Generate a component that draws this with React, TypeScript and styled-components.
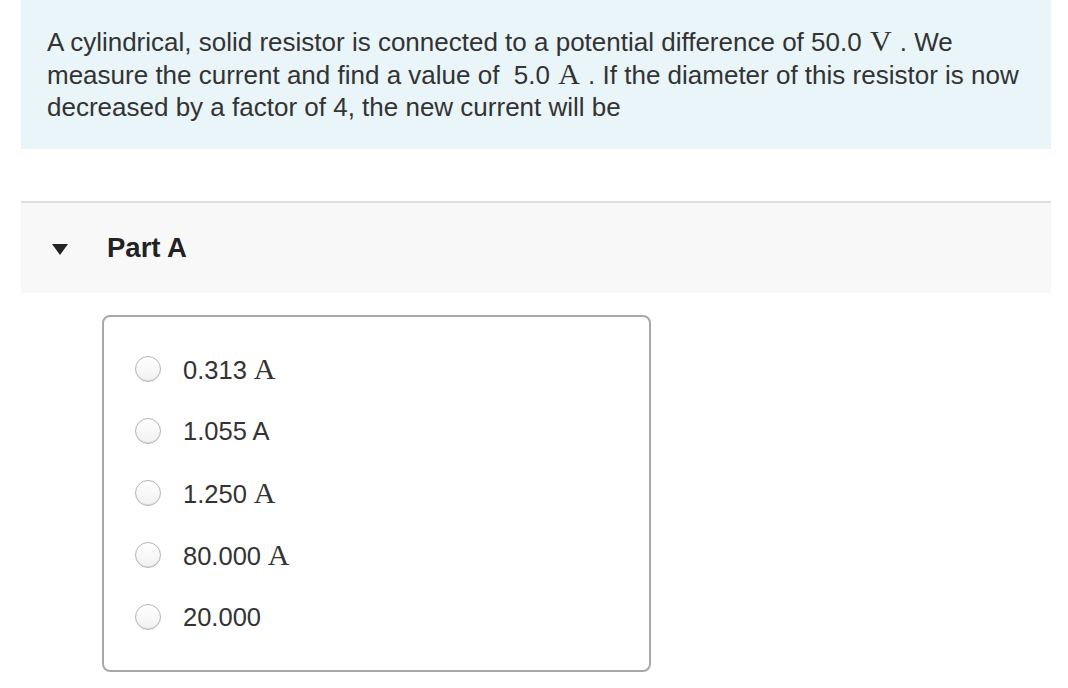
import React from "react";
import styled, { createGlobalStyle } from "styled-components";

const Global = createGlobalStyle`
  html, body { margin: 0; padding: 0; background: #fff; }
  body { font-family: "Liberation Sans", Arial, Helvetica, sans-serif; color: #333; }
`;

const Page = styled.div`
  width: 1068px;
  height: 688px;
  overflow: hidden;
  padding: 0 17px 0 21px;
  box-sizing: border-box;
`;

const Question = styled.div`
  background: #e9f5f8;
  padding: 25px 10px 26px 26px;
  font-size: 26px;
  line-height: 32px;
  color: #333;
  white-space: nowrap;
`;

const M = styled.span`
  font-family: "Liberation Serif", "Times New Roman", serif;
  font-size: 30px;
  margin: 0 1px;
`;

const PartHeader = styled.div`
  margin-top: 52px;
  border-top: 2px solid #dedede;
  background: #f8f8f8;
  height: 92px;
  display: flex;
  align-items: center;
  padding-left: 31px;
  box-sizing: border-box;
`;

const Caret = styled.svg`
  width: 16px;
  height: 11px;
  margin-right: 39px;
  margin-top: 2px;
`;

const PartTitle = styled.span`
  font-weight: bold;
  font-size: 27.5px;
  color: #222;
`;

const Answers = styled.div`
  margin: 22px 0 0 81px;
  width: 549px;
  height: 357px;
  box-sizing: border-box;
  border: 2px solid #a8a8a8;
  border-radius: 8px;
  padding: 21px 0 0 31px;
  display: flex;
  flex-direction: column;
`;

const Row = styled.label`
  display: flex;
  align-items: center;
  height: 62px;
  font-size: 25.5px;
  color: #333;
`;

const Radio = styled.span`
  width: 24px;
  height: 24px;
  border-radius: 50%;
  border: 1px solid #b5b5b5;
  background: linear-gradient(#ffffff, #f1f1f1);
  box-shadow: inset 0 -1px 1px rgba(0,0,0,0.08);
  margin-right: 22px;
  flex-shrink: 0;
`;

const options: { v: string; serifUnit: boolean | null }[] = [
  { v: "0.313", serifUnit: true },
  { v: "1.055", serifUnit: false },
  { v: "1.250", serifUnit: true },
  { v: "80.000", serifUnit: true },
  { v: "20.000", serifUnit: null },
];

export default function App() {
  return (
    <Page>
      <Global />
      <Question>
        A cylindrical, solid resistor is connected to a potential difference of 50.0 <M>V</M> . We
        <br />
        measure the current and find a value of &nbsp;5.0 <M>A</M> . If the diameter of this resistor is now
        <br />
        decreased by a factor of 4, the new current will be
      </Question>
      <PartHeader>
        <Caret viewBox="0 0 16 11">
          <polygon points="0,0 16,0 8,11" fill="#222" />
        </Caret>
        <PartTitle>Part A</PartTitle>
      </PartHeader>
      <Answers>
        {options.map((o) => (
          <Row key={o.v}>
            <Radio />
            <span>
              {o.v}
              {o.serifUnit === true && <M> A</M>}
              {o.serifUnit === false && " A"}
            </span>
          </Row>
        ))}
      </Answers>
    </Page>
  );
}
